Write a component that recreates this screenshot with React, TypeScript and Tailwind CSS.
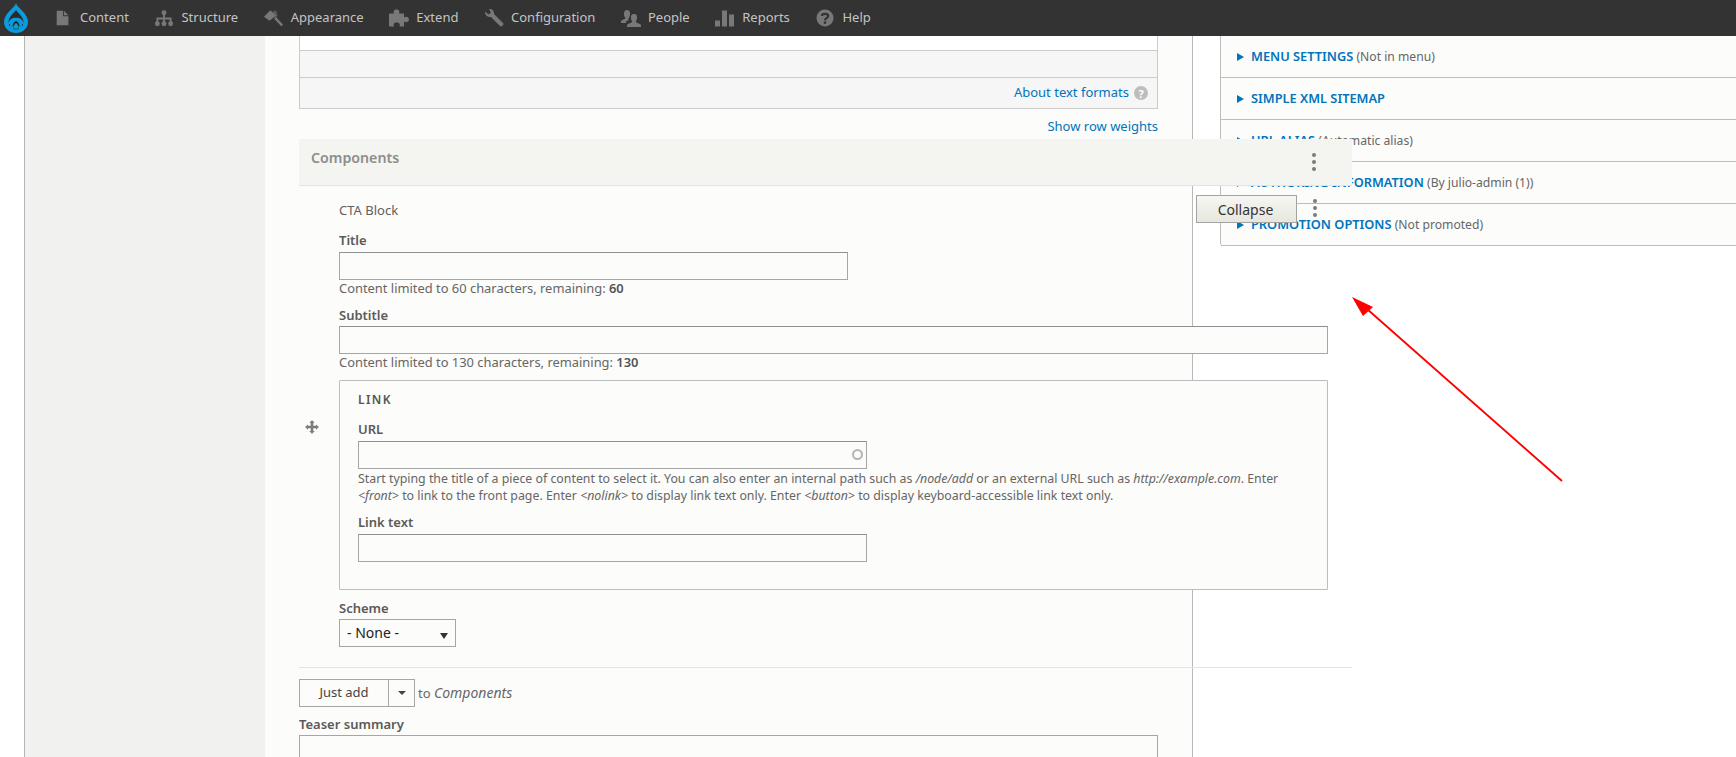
import type { ReactNode } from "react";

const iconColor = "#787878";

function DrupalLogo() {
  return (
    <svg viewBox="0 0 24 30" className="h-[30px] w-6">
      <path d="M12 0C13 5 24 10 24 19A12 11 0 0 1 0 19C0 10 11 5 12 0Z" fill="#0a9cdc" />
      <path d="M12 7C14 10 19.5 14 19.5 19C19.5 23.5 16 26.5 12 26.5C8 26.5 4.5 23.5 4.5 19C4.5 14 10 10 12 7Z" fill="#2a2a2a" />
      <path d="M5 21C8 15 12 15 14.5 18C17 21 18 23 15 26" fill="none" stroke="#0a9cdc" strokeWidth="2.6" />
      <path d="M19 21C16 15 12 15 9.5 18C7 21 6 23 9 26" fill="none" stroke="#0a9cdc" strokeWidth="2.6" />
      <path d="M12 20C13.5 21.5 14.5 22.5 14.5 23.5A2.5 2.5 0 0 1 9.5 23.5C9.5 22.5 10.5 21.5 12 20Z" fill="#0a9cdc" />
    </svg>
  );
}

const toolbarIcons: Record<string, ReactNode> = {
  Content: <path d="M3 2H10V8H16V18H3ZM11 2L16 7H11Z" />,
  Structure: (
    <>
      <circle cx="10" cy="4" r="2.6" />
      <circle cx="3" cy="15.5" r="2.6" />
      <circle cx="10" cy="15.5" r="2.6" />
      <circle cx="17" cy="15.5" r="2.6" />
      <path d="M9 5H11V9H18V14H16V11H11V14H9V11H4V14H2V9H9Z" />
    </>
  ),
  Appearance: (
    <>
      <path d="M0 8L7 1L13 7L6 12.5Z" />
      <path d="M9 3L13 1L15 7L13 9Z" opacity="0.6" />
      <path d="M11 10L13 8L21 17L19 18.5Z" />
    </>
  ),
  Extend: <path d="M0 4H5C4 2 5 0 7.5 0S11 2 10 4H15V8C17 6.5 20 7.5 20 10S17 13.5 15 12V17H10.5C11.5 14.5 10 13 7.5 13S4 14.5 5 17H0Z" />,
  Configuration: <path d="M5 0C8 -0.5 10.5 2 10 5L19 14C20.5 15.5 18 18.5 16 17L7 8C4 8.5 0.5 6 1 2.5L4.5 5.5L7 3.5Z" />,
  People: (
    <>
      <path d="M6 1C8.5 1 9.5 3 9 6C8.7 7.5 8 8.5 7.5 9.5V11L5 12.5V14H0V12.5C0 11 3.5 10.5 4.5 9.5C4 8.5 3.3 7.5 3 6C2.6 3 3.6 1 6 1Z" />
      <path d="M13 5C15.5 5 16.5 7 16 9.5C15.7 11 15 12 14.8 13C15.5 14 20 14.5 20 16.5V18H6V16.5C6 14.5 10.5 14 11.2 13C11 12 10.3 11 10 9.5C9.5 7 10.5 5 13 5Z" />
    </>
  ),
  Reports: <path d="M0 11H5V17H0ZM7 1H12V17H7ZM14 5H19V17H14Z" />,
  Help: (
    <>
      <circle cx="9" cy="9" r="8.5" />
      <path d="M5.8 6.8C6 4.5 12.2 3.8 12.2 7C12.2 9.2 9 9 9 11.2" fill="none" stroke="#333333" strokeWidth="2.2" />
      <rect x="7.8" y="12.4" width="2.4" height="2.4" fill="#333333" />
    </>
  ),
};

const toolbarBoxes: Record<string, string> = {
  Content: "0 0 20 20",
  Structure: "0 0 20 19",
  Appearance: "0 0 22 19",
  Extend: "0 0 20 17",
  Configuration: "0 0 20 18",
  People: "0 0 20 18",
  Reports: "0 0 20 17",
  Help: "0 0 18 18",
};

function Kebab() {
  return (
    <span className="flex flex-col gap-[3px]">
      <span className="h-1 w-1 rounded-full bg-[#7a7a7a]" />
      <span className="h-1 w-1 rounded-full bg-[#7a7a7a]" />
      <span className="h-1 w-1 rounded-full bg-[#7a7a7a]" />
    </span>
  );
}

function TextInput({ className }: { className: string }) {
  return <input type="text" className={`h-[28px] border border-[#a6a6a6] border-t-[#8f8f8f] bg-[#fcfcfa] ${className}`} />;
}

function Label({ children }: { children: ReactNode }) {
  return <div className="h-[17px] text-[13px] leading-[17px] font-semibold text-[#5a5a5a]">{children}</div>;
}

const sideRows = [
  ["MENU SETTINGS", "(Not in menu)"],
  ["SIMPLE XML SITEMAP", ""],
  ["URL ALIAS", "(Automatic alias)"],
  ["AUTHORING INFORMATION", "(By julio-admin (1))"],
  ["PROMOTION OPTIONS", "(Not promoted)"],
];

export default function App() {
  return (
    <div className="relative flex h-screen w-full flex-col overflow-hidden bg-white font-['Noto_Sans',sans-serif] text-[13px] text-[#666]">
      {/* Toolbar */}
      <header className="flex h-9 shrink-0 items-center bg-[#333] pl-1">
        <DrupalLogo />
        <nav className="ml-[25px] flex items-center gap-[25.6px]">
          {Object.keys(toolbarIcons).map((name) => (
            <div key={name} className="flex items-center gap-[7px]">
              <span className="flex h-5 w-5 items-center justify-center">
                <svg viewBox={toolbarBoxes[name]} className="h-[18px] w-5" fill={iconColor}>
                  {toolbarIcons[name]}
                </svg>
              </span>
              <span className="text-[13px] text-[#c4c4c4]">{name}</span>
            </div>
          ))}
        </nav>
      </header>

      <div className="flex min-h-0 flex-1">
        <div className="w-[25px] shrink-0 border-r border-[#b5b5b5]" />
        <div className="w-[240px] shrink-0 bg-[#f1f1f0]" />

        {/* Main column */}
        <main className="w-[928px] shrink-0 border-r border-[#b8b8b8] bg-[#fcfcfa] pl-[34px]">
          <div className="w-[859px]">
            <div className="border-x border-b border-[#ccc]">
              <div className="h-[15px] border-b border-[#ccc] bg-white" />
              <div className="h-[27px] border-b border-[#ccc] bg-[#f6f6f6]" />
              <div className="flex h-[30px] items-center justify-end gap-[5px] bg-[#f6f6f6] pr-[9px]">
                <a className="text-[#0074bd]">About text formats</a>
                <span className="flex h-[14px] w-[14px] items-center justify-center rounded-full bg-[#bdbdbd] text-[11px] leading-none font-bold text-white">?</span>
              </div>
            </div>
            <div className="mt-[9px] text-right leading-[17px] text-[#0074bd]">Show row weights</div>
          </div>

          {/* Components */}
          <section className="relative z-10 mt-[4px] w-[1053px] border-b border-[#e5e5e1]">
            <div className="flex h-[47px] items-center justify-between border-b border-[#e3e3df] bg-[#f4f4f0] pr-[36px] pl-[12px]">
              <span className="mb-[8px] text-[14.2px] font-semibold text-[#8d8d8d]">Components</span>
              <Kebab />
            </div>

            <div className="flex">
              <div className="flex w-[40px] shrink-0 items-center pl-[6px]">
                <svg viewBox="0 0 16 16" className="h-[14px] w-[14px]" fill="#7d7d7d">
                  <path d="M8 0L11 3.5H9.5V6.5H12.5V5L16 8L12.5 11V9.5H9.5V12.5H11L8 16L5 12.5H6.5V9.5H3.5V11L0 8L3.5 5V6.5H6.5V3.5H5Z" />
                </svg>
              </div>

              <div className="w-[989px] pt-[16px] pb-[20px]">
                <div className="h-[17px] leading-[17px] text-[#5f5f5f]">CTA Block</div>

                <div className="mt-[13px]">
                  <Label>Title</Label>
                </div>
                <TextInput className="mt-[3px] block w-[509px]" />
                <div className="h-[17px] text-[12.9px] leading-[17px]">
                  Content limited to 60 characters, remaining: <strong className="font-semibold text-[#555]">60</strong>
                </div>

                <div className="mt-[10px]">
                  <Label>Subtitle</Label>
                </div>
                <TextInput className="mt-[2px] block w-full" />
                <div className="h-[17px] text-[12.9px] leading-[17px]">
                  Content limited to 130 characters, remaining: <strong className="font-semibold text-[#555]">130</strong>
                </div>

                <fieldset className="mt-[9px] h-[210px] rounded-[1px] border border-[#bdbdbd] bg-[#fcfcfa] pt-[10px] pr-[20px] pl-[18px]">
                  <div className="h-[17px] text-[12px] leading-[17px] font-semibold tracking-[1.4px] text-[#555]">LINK</div>
                  <div className="mt-[13px]">
                    <Label>URL</Label>
                  </div>
                  <div className="relative mt-[3px] w-[509px]">
                    <TextInput className="block w-full" />
                    <span className="absolute top-[8px] right-[4px] h-[11px] w-[11px] rounded-full border-2 border-[#b5b5b5]" />
                  </div>
                  <p className="mt-px text-[12.35px] leading-[17px]">
                    Start typing the title of a piece of content to select it. You can also enter an internal path such as <em>/node/add</em> or an external URL such as <em>http://example.com</em>. Enter <em>&lt;front&gt;</em> to link to the front page. Enter <em>&lt;nolink&gt;</em> to display link text only. Enter <em>&lt;button&gt;</em> to display keyboard-accessible link text only.
                  </p>
                  <div className="mt-[10px]">
                    <Label>Link text</Label>
                  </div>
                  <TextInput className="mt-[3px] block w-[509px]" />
                </fieldset>

                <div className="mt-[10px]">
                  <Label>Scheme</Label>
                </div>
                <div className="relative mt-[2px] w-[117px]">
                  <select className="block h-[28px] w-full appearance-none border border-[#a6a6a6] bg-[#fcfcfa] pb-[2px] pl-[7px] text-[14px] text-[#222]">
                    <option>- None -</option>
                  </select>
                  <span className="absolute top-[14px] right-[8px] h-0 w-0 border-x-[4px] border-t-[6px] border-x-transparent border-t-[#333]" />
                </div>
              </div>
            </div>

            {/* Collapse sits over the sidebar column */}
            <button className="absolute top-[56px] left-[897px] h-[28px] w-[101px] border border-[#a3a3a3] bg-gradient-to-b from-[#f6f6f3] to-[#e7e7df] pr-[2px] text-[14px] text-[#333]">
              Collapse
            </button>
            <span className="absolute top-[60px] left-[1014px]">
              <Kebab />
            </span>
          </section>

          <div className="w-[859px]">
            <div className="mt-[11px] flex items-center">
              <div className="flex h-[28px] w-[116px] border border-[#a6a6a6] bg-[#fcfcfa]">
                <span className="flex w-[89px] items-center justify-center border-r border-[#a6a6a6] text-[#444]">Just add</span>
                <span className="flex flex-1 items-center justify-center">
                  <span className="h-0 w-0 border-x-[4px] border-t-[4px] border-x-transparent border-t-[#444]" />
                </span>
              </div>
              <span className="ml-[3px]">
                to <em className="text-[14px]">Components</em>
              </span>
            </div>
            <div className="mt-[9px]">
              <Label>Teaser summary</Label>
            </div>
            <textarea className="mt-[2px] block h-[80px] w-full resize-none border border-[#a6a6a6] bg-[#fcfcfa]" />
          </div>
        </main>

        {/* Sidebar panel */}
        <aside className="ml-[27px] h-[209px] flex-1 rounded-bl-[2px] border-l border-[#bdbdbd] bg-[#fcfcfa]">
          {sideRows.map(([title, note]) => (
            <div key={title} className="flex h-[42px] items-center gap-[7px] border-b border-[#bdbdbd] pl-[16px]">
              <span className="h-0 w-0 border-y-[4px] border-l-[7px] border-y-transparent border-l-[#0074bd]" />
              <span>
                <span className="text-[12.8px] font-semibold text-[#0074bd]">{title}</span>
                {note && <span className="text-[12.15px] text-[#666]"> {note}</span>}
              </span>
            </div>
          ))}
        </aside>
      </div>

      {/* Red annotation arrow */}
      <svg viewBox="0 0 230 200" className="pointer-events-none absolute top-[290px] left-[1345px] z-20 h-[200px] w-[230px]">
        <path d="M217 191L22 19" stroke="#ff0000" strokeWidth="1.8" fill="none" />
        <path d="M7 7L28 17L18 26Z" fill="#ff0000" />
      </svg>
    </div>
  );
}
